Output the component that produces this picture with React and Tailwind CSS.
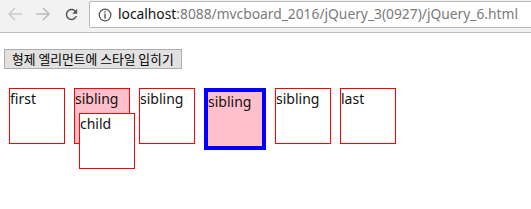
import React from "react";

function Back({ color }) {
  return (
    <svg width="16" height="16" viewBox="0 0 16 16" fill="none">
      <path d="M15 8H2M8 2L2 8l6 6" stroke={color} strokeWidth="1.6" />
    </svg>
  );
}
function Fwd({ color }) {
  return (
    <svg width="16" height="16" viewBox="0 0 16 16" fill="none">
      <path d="M1 8h13M8 2l6 6-6 6" stroke={color} strokeWidth="1.6" />
    </svg>
  );
}
function Reload() {
  return (
    <svg width="17" height="17" viewBox="0 0 24 24">
      <path
        fill="#555555"
        d="M17.65 6.35C16.2 4.9 14.21 4 12 4c-4.42 0-7.990 3.58-7.99 8s3.57 8 7.99 8c3.73 0 6.84-2.55 7.730-6h-2.08c-.82 2.33-3.04 4-5.65 4-3.31 0-6-2.69-6-6s2.69-6 6-6c1.66 0 3.14.69 4.22 1.78L13 11h7V4l-2.35 2.35z"
      />
    </svg>
  );
}
function Info() {
  return (
    <svg width="14" height="14" viewBox="0 0 14 14" fill="none">
      <circle cx="7" cy="7" r="5.8" stroke="#555555" strokeWidth="1.3" />
      <rect x="6.3" y="3.2" width="1.4" height="1.4" fill="#555555" />
      <rect x="6.3" y="5.6" width="1.4" height="5" fill="#555555" />
    </svg>
  );
}

const box = "w-[56px] h-[56px] border border-[#ff0000] shrink-0 text-[14px] leading-[20px] text-[#111111]";

export default function App() {
  return (
    <div className="w-[531px] h-[209px] bg-white overflow-hidden" style={{ fontFamily: '"Noto Sans", sans-serif' }}>
      <div className="h-[33px] bg-[#f2f2f2] border-b border-[#bdbdbd] flex items-start">
        <div className="w-[89px] h-[28px] flex items-center shrink-0">
          <div className="ml-[7px]"><Back color="#cccccc" /></div>
          <div className="ml-[12px]"><Fwd color="#bcbcbc" /></div>
          <div className="ml-[12px] mt-[1px]"><Reload /></div>
        </div>
        <div className="mt-[1px] h-[27px] flex-1 -mr-[4px] rounded-l-[2px] border border-[#b8b8b8] bg-white flex items-center">
          <div className="ml-[8px]"><Info /></div>
          <div className="ml-[6px] text-[13.8px] whitespace-nowrap">
            <span className="text-[#111111]">localhost</span>
            <span className="text-[#7a7a7a]">:8088/mvcboard_2016/jQuery_3(0927)/jQuery_6.html</span>
          </div>
        </div>
      </div>
      <div className="pt-[16px] pl-[4px] flex flex-col items-start">
        <button
          className="h-[20px] px-[7px] bg-[#e1e1e1] border border-[#adadad] text-[12.8px] leading-[18px] text-black whitespace-nowrap"
          style={{ fontFamily: '"Noto Sans CJK KR", sans-serif' }}
        >
          형제 엘리먼트에 스타일 입히기
        </button>
        <div className="flex items-start gap-[9px] mt-[19px] ml-[5px]">
          <div className={box}>first</div>
          <div className={box + " bg-[#ffc0cb]"}>
            <div>sibling</div>
            <div className="w-[56px] h-[56px] border border-[#ff0000] bg-white mt-[4px] ml-[4px]">child</div>
          </div>
          <div className={box}>sibling</div>
          <div className="w-[62px] h-[62px] border-[4px] border-[#0000ff] bg-[#ffc0cb] shrink-0 text-[14px] leading-[20px] text-[#111111]">sibling</div>
          <div className={box}>sibling</div>
          <div className={box}>last</div>
        </div>
      </div>
    </div>
  );
}
